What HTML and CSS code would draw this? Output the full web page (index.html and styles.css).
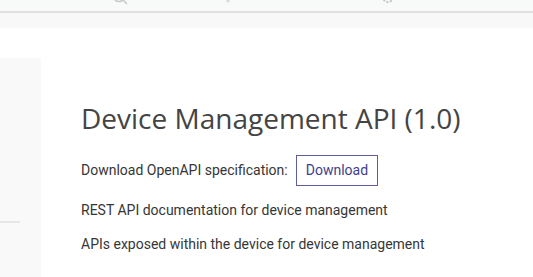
FILE: index.html
```html
<!DOCTYPE html>
<html lang="en">
<head>
<meta charset="utf-8">
<title>Device Management API</title>
<link rel="stylesheet" href="styles.css">
</head>
<body>
<header class="topbar">
  <svg class="top-icon top-icon-search" width="16" height="16" viewBox="0 0 16 16"><circle cx="7" cy="7" r="5.5" fill="none" stroke="#c9c9c9" stroke-width="1.6"/><line x1="11" y1="11" x2="15" y2="15" stroke="#c9c9c9" stroke-width="1.6"/></svg>
  <svg class="top-icon top-icon-dot" width="8" height="16" viewBox="0 0 8 16"><circle cx="4" cy="12" r="1.6" fill="#dadada"/></svg>
  <svg class="top-icon top-icon-gear" width="16" height="16" viewBox="0 0 16 16"><circle cx="8" cy="8" r="5" fill="none" stroke="#c4c4c4" stroke-width="2" stroke-dasharray="2 1.6"/><circle cx="8" cy="8" r="2" fill="none" stroke="#cfcfcf" stroke-width="1.4"/></svg>
</header>
<div class="topline"></div>
<div class="subbar"></div>
<div class="main">
  <nav class="sidebar">
    <div class="sidebar-rule"></div>
  </nav>
  <section class="content">
    <h1 class="title">Device Management API (1.0)</h1>
    <p class="download-row">Download OpenAPI specification:<a class="download-btn" href="#">Download</a></p>
    <p class="text">REST API documentation for device management</p>
    <p class="text">APIs exposed within the device for device management</p>
    <h2 class="subtitle">Response Codes</h2>
  </section>
</div>
</body>
</html>
```

FILE: styles.css
```css
html, body {
  margin: 0;
  padding: 0;
  height: 100%;
  overflow: hidden;
  background: #ffffff;
}

body {
  font-family: Roboto, "Liberation Sans", sans-serif;
  color: #363636;
}

.topbar {
  height: 11px;
  background: #f8f9f9;
  overflow: hidden;
  display: flex;
  align-items: flex-start;
  padding-left: 112px;
}

.top-icon {
  margin-top: -11px;
  flex: none;
}

.top-icon-dot {
  margin-left: 96px;
}

.top-icon-gear {
  margin-left: 148px;
}

.topline {
  height: 2px;
  background: #e0e0e0;
}

.subbar {
  height: 16px;
  background: linear-gradient(#f8f8f8 0, #f8f8f8 13px, #fcfcfc 16px);
}

.main {
  display: flex;
  align-items: stretch;
  height: calc(100% - 29px);
}

.sidebar {
  width: 41px;
  flex: none;
  margin-top: 29px;
  background: #f9f9f9;
}

.sidebar-rule {
  width: 20px;
  height: 2px;
  margin-top: 163px;
  background: #e6e6e6;
}

.content {
  flex: 1;
  padding: 72px 0 0 40px;
}

.title {
  margin: 0 0 20px;
  font-family: "Open Sans", sans-serif;
  font-weight: 400;
  font-size: 28px;
  line-height: 34px;
  color: #444444;
}

.download-row {
  display: flex;
  align-items: center;
  margin: 0 0 14px;
  font-size: 14px;
  line-height: 17px;
}

.download-btn {
  margin-left: 8px;
  padding: 6px 9px;
  border: 1px solid #5e5e9e;
  color: #3e3e8e;
  text-decoration: none;
  font-size: 14px;
  line-height: 17px;
}

.text {
  margin: 0 0 13px;
  font-size: 14px;
  line-height: 21px;
}

.subtitle {
  margin: 18px 0 0;
  font-family: "Open Sans", sans-serif;
  font-weight: 400;
  font-size: 18px;
  line-height: 22px;
  color: #444444;
}
```
